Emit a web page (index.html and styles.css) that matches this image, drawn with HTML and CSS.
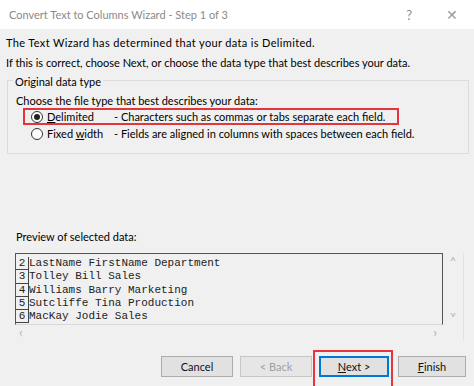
FILE: index.html
```html
<!DOCTYPE html>
<html lang="en">
<head>
    <meta charset="UTF-8">
    <meta name="viewport" content="width=device-width, initial-scale=1.0">
    <title>Convert Text to Columns Wizard - Step 1 of 3</title>
    <link rel="stylesheet" href="styles.css">
</head>
<body>
    <div class="titlebar">
        <span class="title">Convert Text to Columns Wizard - Step 1 of 3</span>
        <span class="help">?</span>
        <span class="close">&#x2715;</span>
    </div>
    <div class="dialog">
        <p class="intro lead">The Text Wizard has determined that your data is Delimited.</p>
        <p class="intro">If this is correct, choose Next, or choose the data type that best describes your data.</p>

        <div class="group">
            <span class="legend">Original data type</span>
            <div class="choose">Choose the file type that best describes your data:</div>
            <div class="option marked">
                <span class="radio checked"></span>
                <span class="label"><u>D</u>elimited</span>
                <span class="desc">- Characters such as commas or tabs separate each field.</span>
            </div>
            <div class="option">
                <span class="radio"></span>
                <span class="label">Fixed <u>w</u>idth</span>
                <span class="desc">- Fields are aligned in columns with spaces between each field.</span>
            </div>
        </div>

        <div class="preview-label">Preview of selected data:</div>
        <div class="preview">
            <div class="preview-main">
                <div class="grid">
                    <div class="row"><span class="num">2</span><span class="cell">LastName FirstName Department</span></div>
                    <div class="row"><span class="num">3</span><span class="cell">Tolley Bill Sales</span></div>
                    <div class="row"><span class="num">4</span><span class="cell">Williams Barry Marketing</span></div>
                    <div class="row"><span class="num">5</span><span class="cell">Sutcliffe Tina Production</span></div>
                    <div class="row"><span class="num">6</span><span class="cell">MacKay Jodie Sales</span></div>
                </div>
                <div class="vscroll">
                    <span class="arrow">&#x2C4;</span>
                    <span class="arrow">&#x2C5;</span>
                </div>
            </div>
            <div class="hscroll">
                <span class="arrow">&lsaquo;</span>
                <span class="arrow">&rsaquo;</span>
            </div>
        </div>

        <div class="buttons">
            <button class="btn cancel">Cancel</button>
            <button class="btn back" disabled>&lt; Back</button>
            <span class="highlight"><button class="btn default"><u>N</u>ext &gt;</button></span>
            <button class="btn finish"><u>F</u>inish</button>
        </div>
    </div>
</body>
</html>
```

FILE: styles.css
```css
body {
    margin: 0;
    width: 474px;
    height: 386px;
    overflow: hidden;
    font-family: Lato, "Noto Sans", sans-serif;
    font-size: 11px;
    color: #000;
    background-color: #f0f0f0;
}

.titlebar {
    height: 29px;
    background-color: #ffffff;
    display: flex;
    align-items: center;
    padding-left: 9px;
}

.title {
    flex: 1;
    font-size: 11px;
    color: #8a8a8a;
}

.help {
    font-size: 13px;
    color: #8a8a8a;
    margin-right: 34px;
}

.close {
    font-size: 14px;
    color: #9a9a9a;
    margin-right: 16px;
}

.dialog {
    padding: 4px 5px 0 6px;
}

.intro {
    margin: 0;
    line-height: 20px;
}

.intro.lead {
    letter-spacing: 0.35px;
}

/* group box drawn by hand, legend sits on the top border */
.group {
    margin: 7px 0 0 1px;
    border: 1px solid #dcdcdc;
    height: 72px;
    padding-left: 8px;
}

.legend {
    display: block;
    width: fit-content;
    margin: -6px 0 0 -3px;
    padding: 0 2px;
    line-height: 14px;
    background-color: #f0f0f0;
}

.choose {
    line-height: 14px;
    margin-top: 5px;
}

.option {
    display: flex;
    align-items: center;
    width: 372px;
    height: 13px;
    border: 2px solid transparent;
    margin-left: 7px;
    line-height: 13px;
    white-space: nowrap;
}

.option.marked {
    border-color: #e4343c;
}

.radio {
    width: 12px;
    height: 12px;
    border: 1px solid #333;
    border-radius: 50%;
    margin-left: 6px;
    margin-right: 4px;
    box-sizing: border-box;
    display: flex;
    align-items: center;
    justify-content: center;
    background-color: #fff;
    flex: none;
}

.radio.checked::after {
    content: "";
    width: 6px;
    height: 6px;
    border-radius: 50%;
    background-color: #222;
}

.label {
    width: 67px;
    flex: none;
}

.preview-label {
    margin: 76px 0 0 10px;
    line-height: 14px;
}

.preview {
    margin: 9px 0 0 9px;
    width: 448px;
    border-right: 1px solid #e2e2e2;
}

.preview-main {
    display: flex;
    height: 72px;
}

.grid {
    width: 426px;
    border: 1px solid #555;
    border-bottom: 1px solid #d8d8d8;
    padding-top: 3px;
    overflow: hidden;
    font-family: "Liberation Mono", monospace;
    font-size: 11px;
    color: #222;
}

.row {
    display: flex;
    height: 13.3px;
    line-height: 13px;
}

.num {
    width: 13px;
    flex: none;
    text-align: center;
    border-bottom: 1px solid #444;
    border-right: 1px solid #444;
    box-sizing: border-box;
    height: 13.3px;
}

.vscroll {
    flex: 1;
    display: flex;
    flex-direction: column;
    justify-content: space-between;
    align-items: center;
    padding-top: 2px;
}

.arrow {
    color: #b0b0b0;
    font-size: 13px;
    line-height: 14px;
}

.hscroll {
    display: flex;
    justify-content: space-between;
    padding: 0 26px 0 4px;
    height: 16px;
}

.buttons {
    display: flex;
    justify-content: flex-end;
    align-items: flex-start;
    margin-top: 9px;
    padding-right: 3px;
}

.btn {
    width: 72px;
    height: 21px;
    margin: 6px 0 0 7px;
    padding: 0;
    font-family: Lato, "Noto Sans", sans-serif;
    font-size: 11px;
    color: #111;
    background-color: #e1e1e1;
    border: 1px solid #adadad;
}

.btn:disabled {
    color: #a0a0a0;
    background-color: #e6e6e6;
    border-color: #c6c6c6;
}

.highlight {
    border: 2px solid #e4343c;
    padding: 4px 2px 10px 4px;
    margin-left: 1px;
}

.btn.default {
    width: 70px;
    margin: 0;
    border: 1px solid #0078d7;
    box-shadow: inset 0 0 0 1px #0078d7;
}

.btn.finish {
    width: 68px;
    margin-left: 5px;
}
```
